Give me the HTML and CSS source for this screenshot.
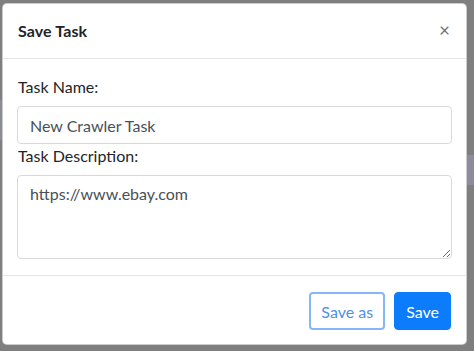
FILE: index.html
```html
<!DOCTYPE html>
<html lang="en">
<head>
    <meta charset="UTF-8">
    <meta name="viewport" content="width=device-width, initial-scale=1.0">
    <title>Save Task</title>
    <link rel="stylesheet" href="styles.css">
</head>
<body>
    <div class="modal">
        <div class="modal-header">
            <h5 class="modal-title">Save Task</h5>
            <button class="close" type="button">&times;</button>
        </div>
        <div class="modal-body">
            <label for="taskName">Task Name:</label>
            <input type="text" id="taskName" class="form-control" value="New Crawler Task">
            <label for="taskDesc">Task Description:</label>
            <textarea id="taskDesc" class="form-control" rows="3">https://www.ebay.com</textarea>
        </div>
        <div class="modal-footer">
            <button class="btn btn-outline">Save as</button>
            <button class="btn btn-primary">Save</button>
        </div>
    </div>
</body>
</html>
```

FILE: styles.css
```css
* {
    margin: 0;
    padding: 0;
    box-sizing: border-box;
    font-family: 'Lato', 'Noto Sans', sans-serif;
}

body {
    width: 474px;
    height: 351px;
    padding: 3px 7px 0 2px;
    background-color: #7f7f7f;
    /* bits of the page peeking out behind the backdrop */
    background-image:
        linear-gradient(#8a8d96, #8a8d96),
        linear-gradient(#8e8b9c, #8e8b9c);
    background-size: 2px 40px, 7px 30px;
    background-position: 0 100px, 467px 155px;
    background-repeat: no-repeat;
    overflow: hidden;
}

.modal {
    width: 465px;
    background: #fff;
    border: 1px solid rgba(0, 0, 0, 0.2);
    border-radius: 5px;
    color: #212529;
    font-size: 16px;
    line-height: 24px;
}

.modal-header {
    display: flex;
    align-items: center;
    justify-content: space-between;
    padding: 15px 14px;
    border-bottom: 1px solid #e4e7ea;
}

.modal-title {
    font-size: 16px;
    font-weight: 700;
    line-height: 24px;
    padding-left: 1px;
    letter-spacing: 0.1px;
}

.close {
    background: none;
    border: none;
    font-size: 19px;
    font-weight: 400;
    line-height: 1;
    color: #000;
    opacity: 0.55;
    margin-right: 2px;
    margin-top: -4px;
    cursor: pointer;
}

.modal-body {
    display: flex;
    flex-direction: column;
    padding: 16px 14px;
}

label {
    display: block;
    padding-left: 1px;
    margin-bottom: 7px;
}

.form-control {
    width: 100%;
    padding: 6px 12px;
    font-size: 16px;
    line-height: 24px;
    color: #495057;
    background: #fff;
    border: 1px solid #d6dadf;
    border-radius: 4px;
}

input.form-control {
    height: 38px;
}

textarea.form-control {
    height: 84px;
    resize: vertical;
}

.modal-footer {
    display: flex;
    justify-content: flex-end;
    gap: 9px;
    padding: 16px 15px 14px;
    border-top: 1px solid #e4e7ea;
}

.btn {
    height: 38px;
    font-size: 16px;
    border-radius: 4px;
    cursor: pointer;
}

.btn-outline {
    padding: 0 10px;
    background: #fff;
    color: #4f8fe6;
    border: 2px solid #86b6f6;
}

.btn-primary {
    padding: 0 11px;
    background: #0d7cfb;
    color: #fff;
    border: 1px solid #0d7cfb;
}
```
